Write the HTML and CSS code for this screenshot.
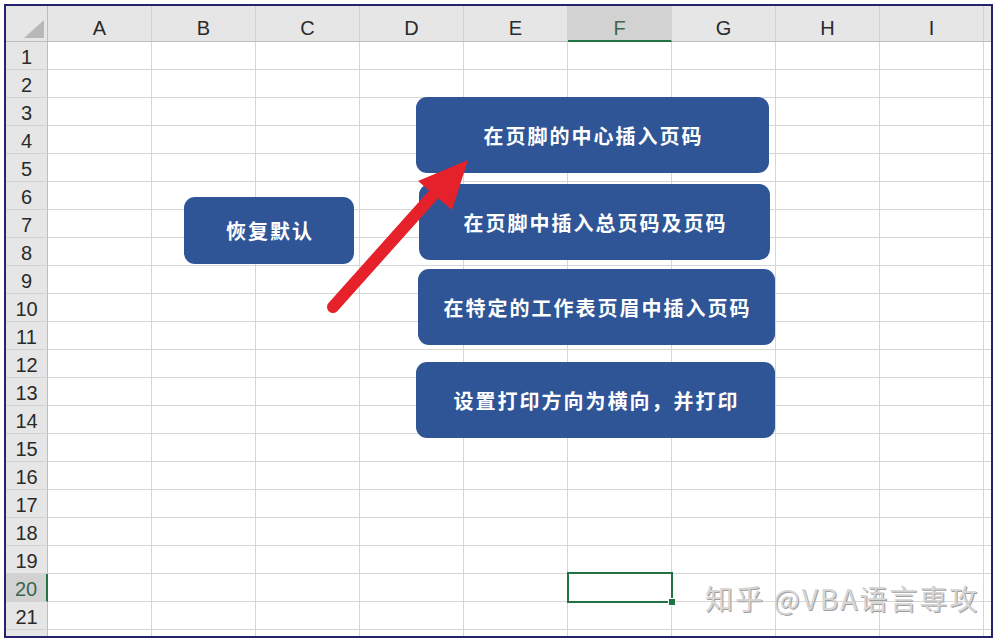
FILE: index.html
```html
<!DOCTYPE html>
<html lang="zh-CN">
<head>
<meta charset="utf-8">
<title>Sheet</title>
<link rel="stylesheet" href="styles.css">
</head>
<body>
<div class="sheet">
  <div class="corner"><span class="tri"></span></div>
  <div class="colheads">
    <div class="ch">A</div>
    <div class="ch">B</div>
    <div class="ch">C</div>
    <div class="ch">D</div>
    <div class="ch">E</div>
    <div class="ch sel">F</div>
    <div class="ch">G</div>
    <div class="ch">H</div>
    <div class="ch">I</div>
    <div class="ch fill"></div>
  </div>
  <div class="rowheads">
    <div class="rh">1</div>
    <div class="rh">2</div>
    <div class="rh">3</div>
    <div class="rh">4</div>
    <div class="rh">5</div>
    <div class="rh">6</div>
    <div class="rh">7</div>
    <div class="rh">8</div>
    <div class="rh">9</div>
    <div class="rh">10</div>
    <div class="rh">11</div>
    <div class="rh">12</div>
    <div class="rh">13</div>
    <div class="rh">14</div>
    <div class="rh">15</div>
    <div class="rh">16</div>
    <div class="rh">17</div>
    <div class="rh">18</div>
    <div class="rh">19</div>
    <div class="rh sel">20</div>
    <div class="rh">21</div>
    <div class="rh fill"></div>
  </div>
  <div class="cells">
    <div class="btn b1">在页脚的中心插入页码</div>
    <div class="btn b2">在页脚中插入总页码及页码</div>
    <div class="btn b3">在特定的工作表页眉中插入页码</div>
    <div class="btn b4">设置打印方向为横向，并打印</div>
    <div class="btn b5">恢复默认</div>
    <svg class="arrow" width="943" height="594" viewBox="0 0 943 594">
      <line x1="285" y1="265" x2="386" y2="152" stroke="#e5212a" stroke-width="12" stroke-linecap="round"/>
      <polygon points="420,118 370,139 404,168" fill="#e5212a"/>
    </svg>
    <div class="selbox"><span class="handle"></span></div>
  </div>
</div>
<div class="watermark">知乎 @VBA语言専攻</div>
</body>
</html>
```

FILE: styles.css
```css
html, body {
  margin: 0;
  padding: 0;
  background: #ffffff;
}

body {
  font-family: "Liberation Sans", Arial, sans-serif;
}

.sheet {
  margin: 4px 0 0 4px;
  width: 989px;
  height: 634px;
  box-sizing: border-box;
  border: 2px solid #24246e;
  display: grid;
  grid-template-columns: 42px 1fr;
  grid-template-rows: 36px 1fr;
  overflow: hidden;
}

.corner {
  background: #e6e6e6;
  border-right: 1px solid #bdbdbd;
  border-bottom: 1px solid #bdbdbd;
  position: relative;
}

.tri {
  position: absolute;
  right: 3px;
  bottom: 3px;
  width: 0;
  height: 0;
  border-style: solid;
  border-width: 0 0 18px 20px;
  border-color: transparent transparent #b8b8b8 transparent;
}

.colheads {
  display: flex;
  background: #e6e6e6;
}

.ch {
  width: 104px;
  flex: none;
  box-sizing: border-box;
  border-right: 1px solid #d2d2d2;
  border-bottom: 1px solid #bdbdbd;
  display: flex;
  justify-content: center;
  align-items: center;
  padding-top: 10px;
  font-size: 20px;
  color: #2a2a2a;
}

.ch.sel {
  background: #d2d2d2;
  border-bottom: 2px solid #217346;
  color: #3a6650;
}

.ch.fill {
  flex: 1;
  width: auto;
  border-right: none;
}

.rowheads {
  display: flex;
  flex-direction: column;
  background: #e6e6e6;
}

.rh {
  height: 28px;
  flex: none;
  box-sizing: border-box;
  border-bottom: 1px solid #d2d2d2;
  border-right: 1px solid #bdbdbd;
  display: flex;
  justify-content: center;
  align-items: center;
  padding-top: 3px;
  font-size: 20px;
  color: #2a2a2a;
}

.rh.sel {
  background: #d2d2d2;
  color: #3a6650;
  border-right: 2px solid #217346;
}

.rh.fill {
  flex: 1;
  height: auto;
  border-bottom: none;
}

.cells {
  position: relative;
  background-color: #ffffff;
  background-image:
    linear-gradient(to right, transparent 103px, #d6d6d6 103px),
    linear-gradient(to bottom, transparent 27px, #d6d6d6 27px);
  background-size: 104px 100%, 100% 28px;
}

.btn {
  position: absolute;
  box-sizing: border-box;
  background: #2f5597;
  border-radius: 11px;
  color: #ffffff;
  font-family: "Noto Sans CJK SC", "Noto Sans", sans-serif;
  font-weight: 700;
  font-size: 20px;
  letter-spacing: 2px;
  display: flex;
  justify-content: center;
  align-items: center;
  padding-left: 2px;
}

.b1 { left: 368px; top: 55px; width: 353px; height: 76px; }
.b2 { left: 371px; top: 142px; width: 351px; height: 76px; }
.b3 { left: 370px; top: 227px; width: 357px; height: 76px; }
.b4 { left: 368px; top: 320px; width: 359px; height: 76px; }
.b5 { left: 136px; top: 155px; width: 170px; height: 67px; }

.arrow {
  position: absolute;
  left: 0;
  top: 0;
}

.selbox {
  position: absolute;
  left: 519px;
  top: 530px;
  width: 106px;
  height: 31px;
  box-sizing: border-box;
  border: 2px solid #217346;
}

.handle {
  position: absolute;
  right: -5px;
  bottom: -5px;
  width: 6px;
  height: 6px;
  background: #217346;
  border: 1px solid #ffffff;
}

.watermark {
  position: absolute;
  left: 705px;
  top: 578px;
  font-family: "Noto Sans CJK SC", "Noto Sans", sans-serif;
  font-size: 28px;
  letter-spacing: 2px;
  color: #d6d6d6;
  text-shadow: 1px 1px 0 #a0a0a0;
  white-space: nowrap;
}
```
